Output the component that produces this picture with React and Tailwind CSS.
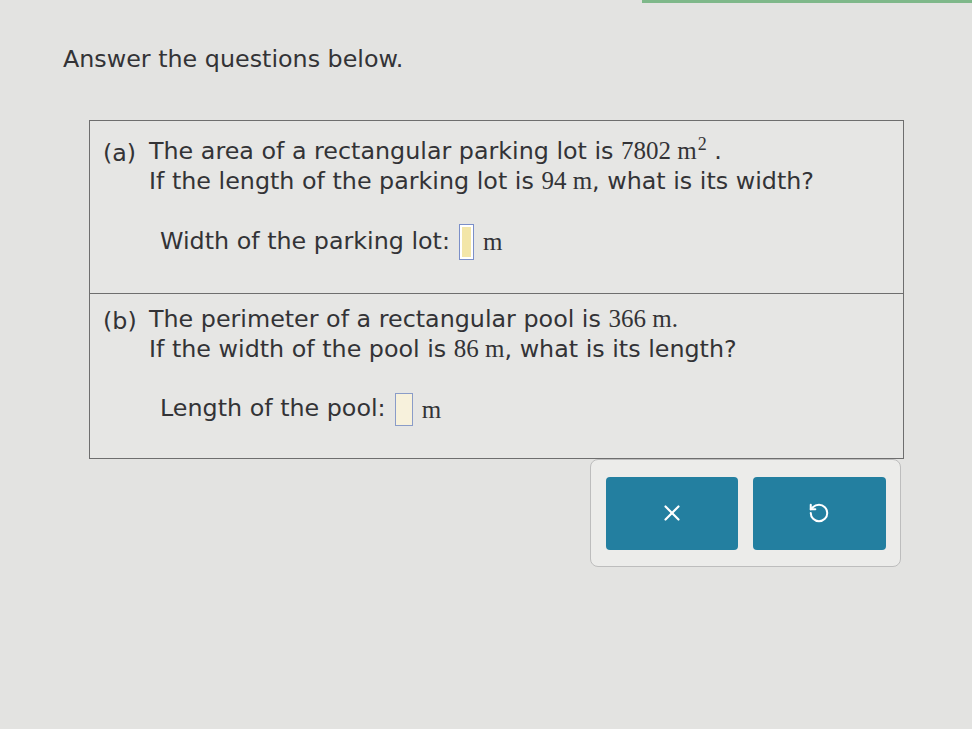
import React from 'react';
import { X, RotateCcw } from 'lucide-react';

const M = ({ children }) => (
  <span className="font-['Liberation_Serif',serif] text-[25px]">{children}</span>
);

const Part = ({ label, line1, line2, prompt, input, pad }) => (
  <div className={pad}>
    <div className="flex pl-[13px]">
      <span className="w-[46px] shrink-0">{label}</span>
      <div className="flex flex-col leading-[30px]">
        <div>{line1}</div>
        <div>{line2}</div>
      </div>
    </div>
    <div className="flex items-center mt-[27px] ml-[70px]">
      <span>{prompt}</span>
      {input}
      <M>m</M>
    </div>
  </div>
);

export default function App() {
  return (
    <div className="w-[972px] h-[729px] bg-[#e3e3e1] relative overflow-hidden font-['DejaVu_Sans',sans-serif] text-[#333336] text-[23.8px]">
      <div className="absolute top-0 right-0 w-[330px] h-[3px] bg-[#7fb88a]" />
      <div className="pt-[44px] pl-[63px] leading-[30px]">Answer the questions below.</div>

      <div className="ml-[89px] mt-[46px] w-[815px] border border-[#6e6e6e] bg-[#e6e6e4]">
        <Part
          pad="pt-[15px] pb-[32px] border-b border-[#6e6e6e]"
          label="(a)"
          line1={<>The area of a rectangular parking lot is <M>7802 m<sup className="text-[18px] relative -top-[9px] ml-[1px]">2</sup></M> .</>}
          line2={<>If the length of the parking lot is <M>94 m</M>, what is its width?</>}
          prompt="Width of the parking lot:"
          input={
            <span className="mx-[9px] w-[15px] h-[36px] border border-[#7b8fc8] bg-[#f3e6a8] shadow-[inset_0_0_0_2px_#fff]" />
          }
        />
        <Part
          pad="pt-[10px] pb-[30px]"
          label="(b)"
          line1={<>The perimeter of a rectangular pool is <M>366 m.</M></>}
          line2={<>If the width of the pool is <M>86 m</M>, what is its length?</>}
          prompt="Length of the pool:"
          input={<span className="mx-[9px] w-[18px] h-[33px] border border-[#8a9cc8] bg-[#f7f1dc]" />}
        />
      </div>

      <div className="ml-[590px] w-[311px] h-[108px] border border-[#bdbdbd] rounded-[8px] bg-[#ececea] flex items-center justify-center gap-[15px]">
        <button className="w-[132px] h-[73px] rounded-[4px] bg-[#237fa0] flex items-center justify-center">
          <X className="text-white" size={26} strokeWidth={2} />
        </button>
        <button className="w-[133px] h-[73px] rounded-[4px] bg-[#237fa0] flex items-center justify-center">
          <RotateCcw className="text-white" size={22} strokeWidth={2.2} />
        </button>
      </div>
    </div>
  );
}
